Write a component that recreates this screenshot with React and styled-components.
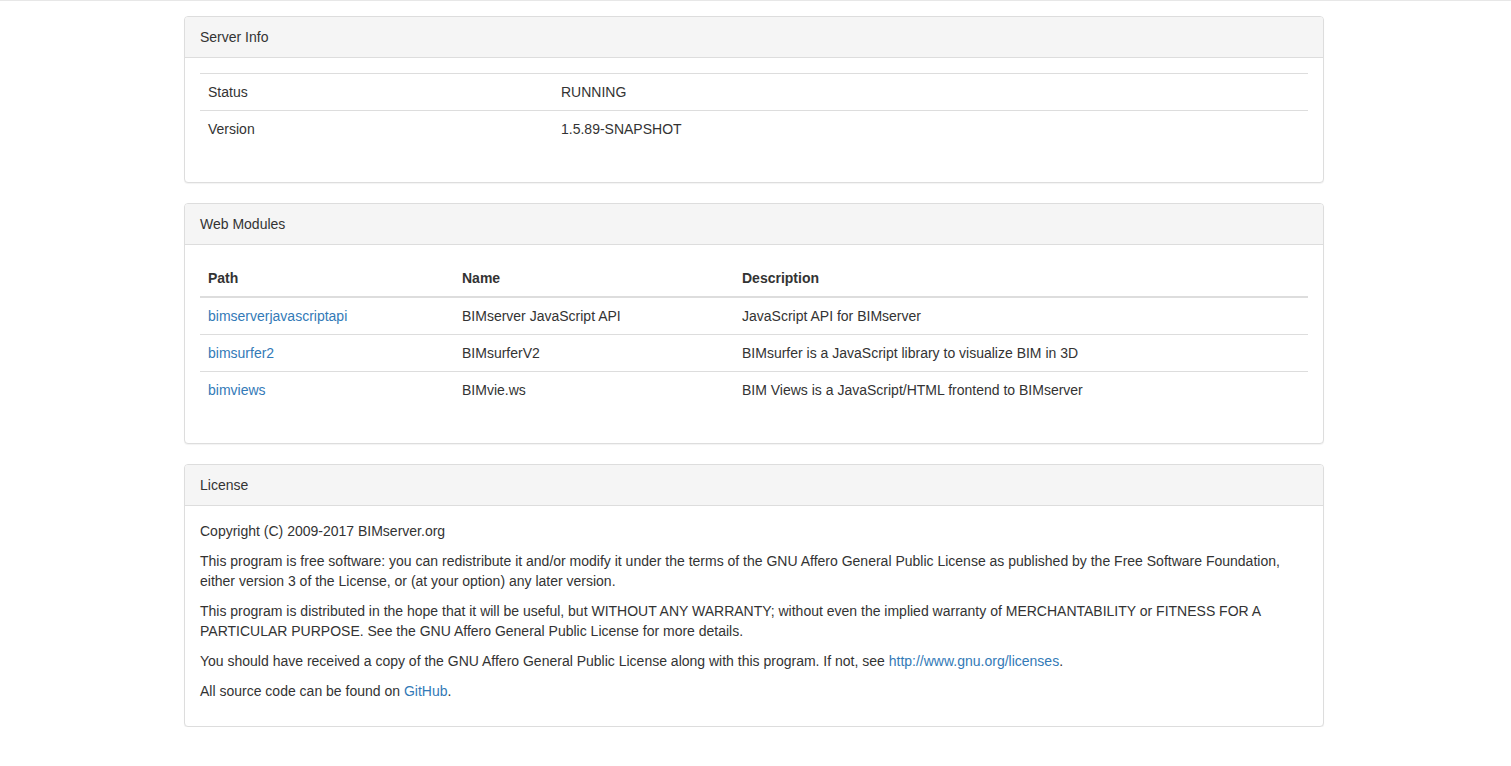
import React from 'react';
import styled, { createGlobalStyle } from 'styled-components';

const GlobalStyle = createGlobalStyle`
  * { box-sizing: border-box; }
  body {
    margin: 0;
    font-family: "Liberation Sans", Arial, Helvetica, sans-serif;
    font-size: 14px;
    line-height: 20px;
    color: #333;
    background: #fff;
  }
`;

const TopRule = styled.div`
  height: 1px;
  background: #e7e7e7;
`;

const Container = styled.div`
  width: 1143px;
  margin: 0 auto;
  padding: 15px 3px 0 0;
  display: flex;
  flex-direction: column;
  gap: 20px;
`;

const Panel = styled.section`
  border: 1px solid #ddd;
  border-radius: 4px;
  background: #fff;
  box-shadow: 0 1px 1px rgba(0, 0, 0, 0.05);
`;

const PanelHeading = styled.div`
  padding: 10px 15px;
  background: #f5f5f5;
  border-bottom: 1px solid #ddd;
  border-radius: 3px 3px 0 0;
  font-size: 14px;
  color: #333;
`;

const PanelBody = styled.div`
  padding: 15px;
`;

const Table = styled.table`
  width: 100%;
  border-collapse: collapse;
  border-spacing: 0;
  margin-bottom: 20px;
`;

const Th = styled.th`
  text-align: left;
  font-weight: bold;
  padding: 8px;
  line-height: 20px;
  border-bottom: 2px solid #ddd;
  width: ${p => p.$w || 'auto'};
`;

const Td = styled.td`
  padding: 8px;
  line-height: 20px;
  border-top: 1px solid #ddd;
  vertical-align: top;
  width: ${p => p.$w || 'auto'};
`;

const Link = styled.a`
  color: #337ab7;
  text-decoration: none;
`;

const Para = styled.p`
  margin: 0 0 10px;
`;

const modules = [
  { path: 'bimserverjavascriptapi', name: 'BIMserver JavaScript API', desc: 'JavaScript API for BIMserver' },
  { path: 'bimsurfer2', name: 'BIMsurferV2', desc: 'BIMsurfer is a JavaScript library to visualize BIM in 3D' },
  { path: 'bimviews', name: 'BIMvie.ws', desc: 'BIM Views is a JavaScript/HTML frontend to BIMserver' },
];

export default function App() {
  return (
    <>
      <GlobalStyle />
      <TopRule />
      <Container>
        <Panel>
          <PanelHeading>Server Info</PanelHeading>
          <PanelBody>
            <Table>
              <tbody>
                <tr>
                  <Td $w="353px">Status</Td>
                  <Td>RUNNING</Td>
                </tr>
                <tr>
                  <Td $w="353px">Version</Td>
                  <Td>1.5.89-SNAPSHOT</Td>
                </tr>
              </tbody>
            </Table>
          </PanelBody>
        </Panel>

        <Panel>
          <PanelHeading>Web Modules</PanelHeading>
          <PanelBody>
            <Table>
              <thead>
                <tr>
                  <Th $w="254px">Path</Th>
                  <Th $w="280px">Name</Th>
                  <Th>Description</Th>
                </tr>
              </thead>
              <tbody>
                {modules.map(m => (
                  <tr key={m.path}>
                    <Td><Link href="#">{m.path}</Link></Td>
                    <Td>{m.name}</Td>
                    <Td>{m.desc}</Td>
                  </tr>
                ))}
              </tbody>
            </Table>
          </PanelBody>
        </Panel>

        <Panel>
          <PanelHeading>License</PanelHeading>
          <PanelBody>
            <Para>Copyright (C) 2009-2017 BIMserver.org</Para>
            <Para>
              This program is free software: you can redistribute it and/or modify it under the terms of the GNU Affero General Public License as published by the Free Software Foundation, either version 3 of the License, or (at your option) any later version.
            </Para>
            <Para>
              This program is distributed in the hope that it will be useful, but WITHOUT ANY WARRANTY; without even the implied warranty of MERCHANTABILITY or FITNESS FOR A PARTICULAR PURPOSE. See the GNU Affero General Public License for more details.
            </Para>
            <Para>
              You should have received a copy of the GNU Affero General Public License along with this program. If not, see <Link href="#">http://www.gnu.org/licenses</Link>.
            </Para>
            <Para>
              All source code can be found on <Link href="#">GitHub</Link>.
            </Para>
          </PanelBody>
        </Panel>
      </Container>
    </>
  );
}
